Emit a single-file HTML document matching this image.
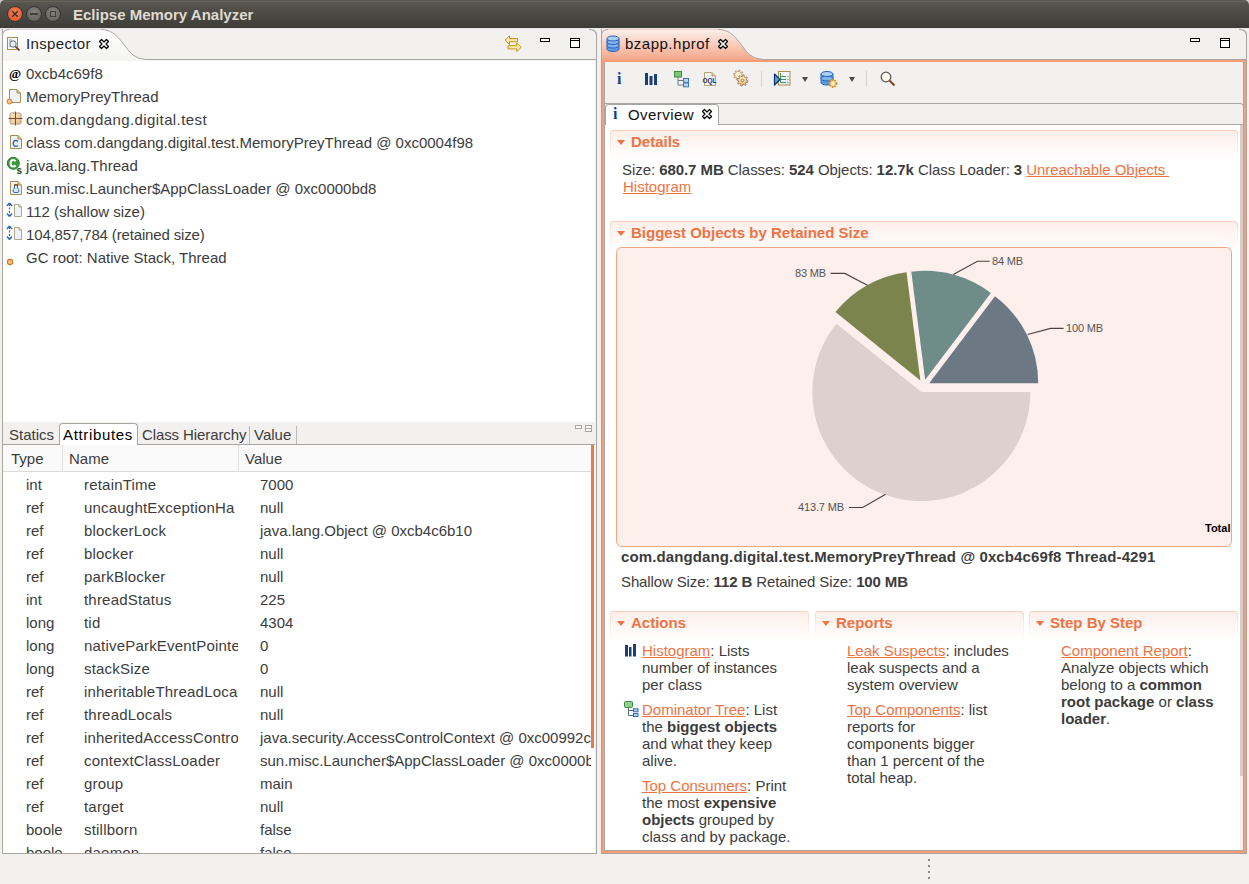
<!DOCTYPE html>
<html><head><meta charset="utf-8">
<style>
*{margin:0;padding:0;box-sizing:border-box}
html,body{width:1249px;height:884px;overflow:hidden;background:#f2f1f0;font-family:"Liberation Sans",sans-serif;font-size:15px;color:#3c3c3c;position:relative}
.a{position:absolute;white-space:nowrap}
.row{position:absolute;left:26px;white-space:nowrap}
.sec{position:absolute;border:1px solid #fad5c7;border-bottom:none;border-radius:4px 4px 0 0;background:linear-gradient(#fdeee9,#ffffff)}
.sec .h{position:absolute;left:20px;top:5px;font-weight:bold;color:#ef7343;font-size:15px;white-space:nowrap}
.sec .tri{position:absolute;left:6px;top:9px;width:0;height:0;border-left:4px solid transparent;border-right:4px solid transparent;border-top:5px solid #ef7343}
.lnk{color:#ef7343;text-decoration:underline}
.txt{position:absolute;line-height:17px;font-size:15px;color:#3c3c3c;white-space:nowrap}
</style></head><body>
<!-- Title bar -->
<div class="a" style="left:0;top:0;width:1249px;height:28px;background:#cfcdc9"></div><div class="a" style="left:0;top:0;width:1249px;height:28px;border-radius:5px 5px 0 0;background:linear-gradient(#5b5850,#4d4b45 45%,#3d3c38)"></div><div class="a" style="left:4px;top:1px;width:1241px;height:1px;background:#67645b"></div>
<div class="a" style="left:7px;top:6px;width:16px;height:16px;border-radius:50%;background:radial-gradient(circle at 50% 35%,#f47c52,#e0522b);border:1px solid #34332f"></div>
<svg class="a" style="left:7px;top:6px" width="16" height="16"><path d="M5.2,5.2 L10.8,10.8 M10.8,5.2 L5.2,10.8" stroke="#3a2a22" stroke-width="1.3"/></svg>
<div class="a" style="left:26px;top:6px;width:16px;height:16px;border-radius:50%;background:radial-gradient(circle at 50% 35%,#85837d,#5f5d58);border:1px solid #34332f"></div>
<div class="a" style="left:30px;top:13px;width:8px;height:2px;background:#3f3e3a"></div>
<div class="a" style="left:45px;top:6px;width:16px;height:16px;border-radius:50%;background:radial-gradient(circle at 50% 35%,#85837d,#5f5d58);border:1px solid #34332f"></div>
<div class="a" style="left:50px;top:11px;width:6px;height:6px;border:1.3px solid #3f3e3a"></div>
<div class="a titlehl" style="left:0;top:28px;width:1249px;height:1px;background:#e9e7e4"></div>
<div class="a" style="left:73px;top:6px;font-weight:bold;color:#dfdbd2;font-size:15px">Eclipse Memory Analyzer</div>
<!-- LEFT PANEL -->
<div class="a" style="left:2px;top:29px;width:595px;height:825px;background:#f2f1f0;border:1px solid #a9a6a1;border-top:none;border-radius:0 6px 0 0"></div>
<svg class="a" style="left:0;top:28px" width="600" height="34">
  <defs><linearGradient id="gIns" x1="0" y1="0" x2="0" y2="1"><stop offset="0" stop-color="#ffffff"/><stop offset="1" stop-color="#f2f1f0"/></linearGradient></defs>
  <path d="M2.5,40 L2.5,8 Q2.5,1.5 9,1.5 L101,1.5 C118,1.5 124,20 133,27 Q138,31 146,31.5 L589,31.5 Q596.5,31.5 596.5,24 L596.5,8 Q596.5,1.5 590,1.5 L101,1.5" fill="none" stroke="none"/>
  <path d="M2.5,40 L2.5,8 Q2.5,1.5 9,1.5 L101,1.5 C118,1.5 124,20 133,27 Q138,31 146,31.5 L595,31.5 L595,40 Z" fill="url(#gIns)"/>
  <path d="M2.5,40 L2.5,8 Q2.5,1.5 9,1.5" fill="none" stroke="#a9a6a1" stroke-width="1"/><path d="M9,1.5 L101,1.5" fill="none" stroke="#d9d6d2" stroke-width="1"/><path d="M101,1.5 C118,1.5 124,20 133,27 Q138,31 146,31.5 L596,31.5" fill="none" stroke="#a9a6a1" stroke-width="1"/>
  <path d="M589,1.5 Q596.5,1.5 596.5,8 L596.5,40" fill="none" stroke="#a9a6a1" stroke-width="1"/>
</svg>
<!-- inspector tab icon -->
<svg class="a" style="left:6px;top:36px" width="16" height="16">
  <rect x="1.5" y="1.5" width="10" height="12" fill="#f6f8fb" stroke="#a98d4b"/>
  <path d="M3,4h3M3,6h2M3,10h2" stroke="#7b9ad0" stroke-width="1"/>
  <circle cx="7" cy="8" r="3.2" fill="#e9eef3" stroke="#6d6f75" stroke-width="1"/>
  <path d="M9.3,10.3 L13.5,14.5" stroke="#7a4a3a" stroke-width="1.8"/>
</svg>
<div class="a" style="left:26px;top:35px;font-size:15px;color:#1e1e1e;letter-spacing:0.35px">Inspector</div>
<svg class="a" style="left:98px;top:38px" width="12" height="12"><path d="M1.5,3.5 L3.5,1.5 L6,4 L8.5,1.5 L10.5,3.5 L8,6 L10.5,8.5 L8.5,10.5 L6,8 L3.5,10.5 L1.5,8.5 L4,6 Z" fill="#fff" stroke="#000" stroke-width="1.2" stroke-linejoin="round"/></svg>
<!-- header right icons -->
<svg class="a" style="left:503px;top:34px" width="20" height="20">
  <path d="M2,6.2 L6.5,1.8 L6.5,4.6 L14.5,4.6 L14.5,7.8 L6.5,7.8 L6.5,10.6 Z" fill="#fde9a8" stroke="#c8951d" stroke-width="1" stroke-linejoin="round"/>
  <path d="M18.2,13.3 L13.7,8.9 L13.7,11.7 L5,11.7 L5,14.9 L13.7,14.9 L13.7,17.7 Z" fill="#fde9a8" stroke="#c8951d" stroke-width="1" stroke-linejoin="round"/>
</svg>
<div class="a" style="left:540px;top:38px;width:10px;height:4px;border:1px solid #000;background:#fff"></div>
<div class="a" style="left:570px;top:38px;width:10px;height:10px;border:1px solid #000;background:#fff"></div><div class="a" style="left:571px;top:40px;width:8px;height:1px;background:#000"></div>
<!-- content white -->
<div class="a" style="left:3px;top:61px;width:592px;height:361px;background:#fff"></div>

<!-- rows -->
<div class="a" style="left:9px;top:66px;font-family:'Liberation Serif';font-weight:bold;font-size:13px;color:#000">@</div>
<div class="row" style="top:65px">0xcb4c69f8</div>
<svg class="a" style="left:6px;top:88px" width="17" height="17">
  <path d="M3.5,1.5 L11,1.5 L14.5,5 L14.5,14.5 L3.5,14.5 Z" fill="#eef3fa" stroke="#a98d4b"/>
  <path d="M11,1.5 L11,5 L14.5,5" fill="#e8c572" stroke="#a98d4b"/>
  <circle cx="3.5" cy="13.5" r="2.5" fill="#fdc38a" stroke="#d6731e"/>
</svg>
<div class="row" style="top:88px">MemoryPreyThread</div>
<svg class="a" style="left:8px;top:111px" width="15" height="15">
  <defs><linearGradient id="gPk" x1="0" y1="0" x2="1" y2="1"><stop offset="0" stop-color="#fbe8c0"/><stop offset="1" stop-color="#e6c08a"/></linearGradient></defs>
  <rect x="2" y="2" width="11" height="11" rx="1.5" fill="url(#gPk)" stroke="#b88f78" stroke-width="1"/>
  <path d="M7.5,0.5 L7.5,14.5 M0.5,7.5 L14.5,7.5" stroke="#7a4a3a" stroke-width="1"/>
</svg>
<div class="row" style="top:111px;letter-spacing:0.4px">com.dangdang.digital.test</div>
<svg class="a" style="left:9px;top:134px" width="14" height="16">
  <path d="M1.5,1.5 L9,1.5 L12.5,5 L12.5,14.5 L1.5,14.5 Z" fill="#eef3fa" stroke="#a98d4b"/>
  <path d="M9,1.5 L9,5 L12.5,5" fill="#e8c572" stroke="#a98d4b"/>
  <path d="M9,7.5 Q8,6.5 6.5,6.5 Q4.3,6.5 4.3,9.5 Q4.3,12.3 6.5,12.3 Q8,12.3 9,11.5" fill="none" stroke="#2e66b5" stroke-width="1.3"/>
</svg>
<div class="row" style="top:134px">class com.dangdang.digital.test.MemoryPreyThread @ 0xc0004f98</div>
<svg class="a" style="left:6px;top:156px" width="18" height="18">
  <circle cx="7.3" cy="7.3" r="6" fill="#3d9b3d" stroke="#2a7a2a" stroke-width="1"/>
  <path d="M9.6,5.2 Q8.8,4 7.3,4 Q4.6,4 4.6,7.3 Q4.6,10.6 7.3,10.6 Q8.8,10.6 9.6,9.4" fill="none" stroke="#fff" stroke-width="2"/>
  <text x="10.5" y="17.5" font-family="Liberation Sans" font-weight="bold" font-size="10" fill="#0a4a0a">s</text>
</svg>
<div class="row" style="top:157px">java.lang.Thread</div>
<svg class="a" style="left:9px;top:180px" width="14" height="16">
  <path d="M1.5,1.5 L9,1.5 L12.5,5 L12.5,14.5 L1.5,14.5 Z" fill="#eef3fa" stroke="#a98d4b"/>
  <path d="M9,1.5 L9,5 L12.5,5" fill="#e8c572" stroke="#a98d4b"/>
  <path d="M5,5 L9,5 M5.5,5.5 L5.5,8 Q4,9.5 4,11 Q4,12.5 5.5,12.5 L8.5,12.5 Q10,12.5 10,11 Q10,9.5 8.5,8 L8.5,5.5" fill="#d8e6f7" stroke="#2e66b5" stroke-width="1"/>
  <path d="M5,5 L9,5" stroke="#a0442a" stroke-width="1.5"/>
</svg>
<div class="row" style="top:180px">sun.misc.Launcher$AppClassLoader @ 0xc0000bd8</div>
<svg class="a" style="left:6px;top:202px" width="17" height="17">
  <path d="M3.5,1 L1,4 M3.5,1 L6,4 M3.5,14.5 L1,11.5 M3.5,14.5 L6,11.5" stroke="#2e66b5" stroke-width="1.4" fill="none"/>
  <path d="M3.5,2 L3.5,14" stroke="#2e66b5" stroke-width="1.2" stroke-dasharray="2,1.5"/>
  <path d="M8.5,2.5 L13,2.5 L15.5,5 L15.5,14.5 L8.5,14.5 Z" fill="#eef3fa" stroke="#aea58a"/>
  <path d="M13,2.5 L13,5 L15.5,5" fill="#e8c572" stroke="#aea58a"/>
</svg>
<div class="row" style="top:203px">112 (shallow size)</div>
<svg class="a" style="left:6px;top:225px" width="17" height="17">
  <path d="M3.5,1 L1,4 M3.5,1 L6,4 M3.5,14.5 L1,11.5 M3.5,14.5 L6,11.5" stroke="#2e66b5" stroke-width="1.4" fill="none"/>
  <path d="M3.5,2 L3.5,14" stroke="#2e66b5" stroke-width="1.2" stroke-dasharray="2,1.5"/>
  <path d="M8.5,2.5 L13,2.5 L15.5,5 L15.5,14.5 L8.5,14.5 Z" fill="#eef3fa" stroke="#aea58a"/>
  <path d="M13,2.5 L13,5 L15.5,5" fill="#e8c572" stroke="#aea58a"/>
</svg>
<div class="row" style="top:226px;letter-spacing:-0.15px">104,857,784 (retained size)</div>
<svg class="a" style="left:6px;top:258px" width="8" height="8"><circle cx="4" cy="4" r="2.6" fill="#fcc28c" stroke="#d6701c" stroke-width="1.1"/></svg>
<div class="row" style="top:249px">GC root: Native Stack, Thread</div>

<!-- bottom tab strip -->
<div class="a" style="left:3px;top:422px;width:592px;height:23px;background:#f2f1f0;border-bottom:1px solid #a9a6a1"></div>
<div class="a" style="left:59px;top:423px;width:79px;height:22px;background:#fff;border:1px solid #a9a6a1;border-bottom:none;border-radius:4px 4px 0 0"></div>
<div class="a" style="left:249px;top:426px;width:1px;height:18px;background:#bdbab5"></div>
<div class="a" style="left:296px;top:426px;width:1px;height:18px;background:#bdbab5"></div>
<div class="a" style="left:9px;top:426px;color:#3c3c3c">Statics</div>
<div class="a" style="left:63px;top:426px;color:#000;letter-spacing:0.65px">Attributes</div>
<div class="a" style="left:142px;top:426px;color:#3c3c3c;letter-spacing:-0.1px">Class Hierarchy</div>
<div class="a" style="left:254px;top:426px;color:#3c3c3c">Value</div>
<div class="a" style="left:575px;top:425px;width:7px;height:4px;border:1px solid #a9a6a1;background:#fff"></div>
<div class="a" style="left:585px;top:425px;width:7px;height:7px;border:1px solid #a9a6a1;background:#fff"></div>
<div class="a" style="left:586px;top:428px;width:5px;height:1px;background:#a9a6a1"></div>

<!-- table -->
<div class="a" style="left:3px;top:445px;width:592px;height:408px;background:#fff"></div>
<div class="a" style="left:3px;top:445px;width:588px;height:27px;background:#fafafa;border-bottom:1px solid #dcdbd9"></div>
<div class="a" style="left:62px;top:445px;width:1px;height:27px;background:#e2e1df"></div>
<div class="a" style="left:238px;top:445px;width:1px;height:27px;background:#e2e1df"></div>
<div class="a" style="left:11px;top:450px">Type</div>
<div class="a" style="left:69px;top:450px">Name</div>
<div class="a" style="left:245px;top:450px">Value</div>
<div class="a" style="left:591px;top:445px;width:3px;height:303px;background:#f07746"></div>
<div id="tbl" class="a" style="left:3px;top:473px;width:588px;height:380px;overflow:hidden">
<div class="a" style="left:23px;top:3px;width:36px;overflow:hidden">int</div>
<div class="a" style="left:81px;top:3px;width:154px;overflow:hidden;letter-spacing:0.2px">retainTime</div>
<div class="a" style="left:257px;top:3px">7000</div>
<div class="a" style="left:23px;top:26px;width:36px;overflow:hidden">ref</div>
<div class="a" style="left:81px;top:26px;width:154px;overflow:hidden;letter-spacing:0.2px">uncaughtExceptionHa</div>
<div class="a" style="left:257px;top:26px">null</div>
<div class="a" style="left:23px;top:49px;width:36px;overflow:hidden">ref</div>
<div class="a" style="left:81px;top:49px;width:154px;overflow:hidden;letter-spacing:0.2px">blockerLock</div>
<div class="a" style="left:257px;top:49px">java.lang.Object @ 0xcb4c6b10</div>
<div class="a" style="left:23px;top:72px;width:36px;overflow:hidden">ref</div>
<div class="a" style="left:81px;top:72px;width:154px;overflow:hidden;letter-spacing:0.2px">blocker</div>
<div class="a" style="left:257px;top:72px">null</div>
<div class="a" style="left:23px;top:95px;width:36px;overflow:hidden">ref</div>
<div class="a" style="left:81px;top:95px;width:154px;overflow:hidden;letter-spacing:0.2px">parkBlocker</div>
<div class="a" style="left:257px;top:95px">null</div>
<div class="a" style="left:23px;top:118px;width:36px;overflow:hidden">int</div>
<div class="a" style="left:81px;top:118px;width:154px;overflow:hidden;letter-spacing:0.2px">threadStatus</div>
<div class="a" style="left:257px;top:118px">225</div>
<div class="a" style="left:23px;top:141px;width:36px;overflow:hidden">long</div>
<div class="a" style="left:81px;top:141px;width:154px;overflow:hidden;letter-spacing:0.2px">tid</div>
<div class="a" style="left:257px;top:141px">4304</div>
<div class="a" style="left:23px;top:164px;width:36px;overflow:hidden">long</div>
<div class="a" style="left:81px;top:164px;width:154px;overflow:hidden;letter-spacing:0.2px">nativeParkEventPointe</div>
<div class="a" style="left:257px;top:164px">0</div>
<div class="a" style="left:23px;top:187px;width:36px;overflow:hidden">long</div>
<div class="a" style="left:81px;top:187px;width:154px;overflow:hidden;letter-spacing:0.2px">stackSize</div>
<div class="a" style="left:257px;top:187px">0</div>
<div class="a" style="left:23px;top:210px;width:36px;overflow:hidden">ref</div>
<div class="a" style="left:81px;top:210px;width:154px;overflow:hidden;letter-spacing:0.2px">inheritableThreadLoca</div>
<div class="a" style="left:257px;top:210px">null</div>
<div class="a" style="left:23px;top:233px;width:36px;overflow:hidden">ref</div>
<div class="a" style="left:81px;top:233px;width:154px;overflow:hidden;letter-spacing:0.2px">threadLocals</div>
<div class="a" style="left:257px;top:233px">null</div>
<div class="a" style="left:23px;top:256px;width:36px;overflow:hidden">ref</div>
<div class="a" style="left:81px;top:256px;width:154px;overflow:hidden;letter-spacing:0.2px">inheritedAccessContro</div>
<div class="a" style="left:257px;top:256px">java.security.AccessControlContext @ 0xc00992c</div>
<div class="a" style="left:23px;top:279px;width:36px;overflow:hidden">ref</div>
<div class="a" style="left:81px;top:279px;width:154px;overflow:hidden;letter-spacing:0.2px">contextClassLoader</div>
<div class="a" style="left:257px;top:279px">sun.misc.Launcher$AppClassLoader @ 0xc0000bd8</div>
<div class="a" style="left:23px;top:302px;width:36px;overflow:hidden">ref</div>
<div class="a" style="left:81px;top:302px;width:154px;overflow:hidden;letter-spacing:0.2px">group</div>
<div class="a" style="left:257px;top:302px">main</div>
<div class="a" style="left:23px;top:325px;width:36px;overflow:hidden">ref</div>
<div class="a" style="left:81px;top:325px;width:154px;overflow:hidden;letter-spacing:0.2px">target</div>
<div class="a" style="left:257px;top:325px">null</div>
<div class="a" style="left:23px;top:348px;width:36px;overflow:hidden">boolean</div>
<div class="a" style="left:81px;top:348px;width:154px;overflow:hidden;letter-spacing:0.2px">stillborn</div>
<div class="a" style="left:257px;top:348px">false</div>
<div class="a" style="left:23px;top:371px;width:36px;overflow:hidden">boolean</div>
<div class="a" style="left:81px;top:371px;width:154px;overflow:hidden;letter-spacing:0.2px">daemon</div>
<div class="a" style="left:257px;top:371px">false</div>
</div>
<!-- RIGHT PANEL -->
<div class="a" style="left:601px;top:29px;width:646px;height:825px;background:#f2f1f0;border:1px solid #a9a6a1;border-top:none;border-radius:0 6px 0 0"></div>
<svg class="a" style="left:598px;top:28px" width="651" height="34">
  <defs><linearGradient id="gHp" x1="0" y1="0" x2="0" y2="1"><stop offset="0" stop-color="#fdf0ea"/><stop offset="1" stop-color="#f4a283"/></linearGradient></defs>
  <path d="M4,34 L4,8 Q4,1.5 10.5,1.5 L120,1.5 C138,1.5 143,20 152,27 Q157,31 165,31.5 L648,31.5 L648,34 Z" fill="url(#gHp)"/>
  <path d="M3.5,34 L3.5,8 Q3.5,1.5 10,1.5" fill="none" stroke="#a9a6a1" stroke-width="1"/><path d="M10,1.5 L120,1.5" fill="none" stroke="#f3d2c4" stroke-width="1"/><path d="M120,1.5 C138,1.5 143,20 152,27 Q157,31 165,31.5 L648,31.5" fill="none" stroke="#a9a6a1" stroke-width="1"/>
  <path d="M641,1.5 Q648.5,1.5 648.5,8 L648.5,34" fill="none" stroke="#a9a6a1" stroke-width="1"/>
</svg>
<!-- orange frame -->
<div class="a" style="left:602px;top:60px;width:644px;height:793px;border:2px solid #f89c76"></div>
<div class="a" style="left:604px;top:62px;width:640px;height:789px;border:1px solid #aba7a2;border-top:none"></div>
<!-- db icon in tab -->
<svg class="a" style="left:606px;top:35px" width="15" height="18">
  <ellipse cx="7" cy="14" rx="6" ry="2.5" fill="#5c9be0" stroke="#2a62c0"/>
  <rect x="1" y="4" width="12" height="10" fill="#5c9be0"/>
  <path d="M1,4 L1,14 M13,4 L13,14" stroke="#2a62c0"/>
  <ellipse cx="7" cy="10.5" rx="6" ry="2.5" fill="#7fb5ec" stroke="#2a62c0"/>
  <ellipse cx="7" cy="7" rx="6" ry="2.5" fill="#7fb5ec" stroke="#2a62c0"/>
  <ellipse cx="7" cy="3.5" rx="6" ry="2.5" fill="#a9d0f5" stroke="#2a62c0"/>
</svg>
<div class="a" style="left:625px;top:35px;color:#111;letter-spacing:0.5px">bzapp.hprof</div>
<svg class="a" style="left:717px;top:38px" width="12" height="12"><path d="M1.5,3.5 L3.5,1.5 L6,4 L8.5,1.5 L10.5,3.5 L8,6 L10.5,8.5 L8.5,10.5 L6,8 L3.5,10.5 L1.5,8.5 L4,6 Z" fill="#fff" stroke="#000" stroke-width="1.2" stroke-linejoin="round"/></svg>
<div class="a" style="left:1190px;top:38px;width:10px;height:4px;border:1px solid #000;background:#fff"></div>
<div class="a" style="left:1220px;top:38px;width:10px;height:10px;border:1px solid #000;background:#fff"></div><div class="a" style="left:1221px;top:40px;width:8px;height:1px;background:#000"></div>

<!-- toolbar -->
<div class="a" style="left:617px;top:70px;font-family:'Liberation Serif';font-weight:bold;font-size:16px;color:#0d3f8f">i</div>
<svg class="a" style="left:644px;top:72px" width="14" height="14"><rect x="1" y="1" width="3" height="12" fill="#1d3f78"/><rect x="5.5" y="4" width="3" height="9" fill="#1d3f78"/><rect x="10" y="2" width="3" height="11" fill="#1d3f78"/></svg>
<svg class="a" style="left:673px;top:70px" width="17" height="18">
  <rect x="1.5" y="1.5" width="7" height="5.5" fill="#7cc87a" stroke="#3f8a3d"/>
  <path d="M5,7 L5,15 L10.5,15 M5,10.5 L10.5,10.5" stroke="#6a7a90" fill="none"/>
  <rect x="10.5" y="8.5" width="5" height="3.8" fill="#bcd6f0" stroke="#3a74c0"/>
  <rect x="10.5" y="13" width="5" height="3.8" fill="#bcd6f0" stroke="#3a74c0"/>
</svg>
<svg class="a" style="left:702px;top:71px" width="16" height="16">
  <path d="M2.5,1.5 L10,1.5 L13.5,5 L13.5,14.5 L2.5,14.5 Z" fill="#eef3fa" stroke="#b9a46c"/>
  <path d="M10,1.5 L10,5 L13.5,5" fill="#e8c572" stroke="#b9a46c"/>
  <text x="0.5" y="11.5" font-family="Liberation Sans" font-weight="bold" font-size="6.5" fill="#25307a">OQL</text>
</svg>
<svg class="a" style="left:732px;top:69px" width="18" height="18">
  <defs><linearGradient id="gGear" x1="0" y1="0" x2="0" y2="1"><stop offset="0" stop-color="#fff6c8"/><stop offset="1" stop-color="#f0b860"/></linearGradient></defs>
  <path d="M9.90,6.01 L11.28,6.40 L11.05,7.53 L9.63,7.35 L8.87,8.48 L9.57,9.74 L8.61,10.37 L7.73,9.24 L6.39,9.50 L6.00,10.88 L4.87,10.65 L5.05,9.23 L3.92,8.47 L2.66,9.17 L2.03,8.21 L3.16,7.33 L2.90,5.99 L1.52,5.60 L1.75,4.47 L3.17,4.65 L3.93,3.52 L3.23,2.26 L4.19,1.63 L5.07,2.76 L6.41,2.50 L6.80,1.12 L7.93,1.35 L7.75,2.77 L8.88,3.53 L10.14,2.83 L10.77,3.79 L9.64,4.67 Z" fill="#fbf1cf" stroke="#b98a6a" stroke-width="0.9"/>
  <path d="M14.60,11.51 L16.08,11.96 L15.82,13.25 L14.28,13.08 L13.39,14.41 L14.12,15.77 L13.02,16.50 L12.06,15.29 L10.49,15.60 L10.04,17.08 L8.75,16.82 L8.92,15.28 L7.59,14.39 L6.23,15.12 L5.50,14.02 L6.71,13.06 L6.40,11.49 L4.92,11.04 L5.18,9.75 L6.72,9.92 L7.61,8.59 L6.88,7.23 L7.98,6.50 L8.94,7.71 L10.51,7.40 L10.96,5.92 L12.25,6.18 L12.08,7.72 L13.41,8.61 L14.77,7.88 L15.50,8.98 L14.29,9.94 Z" fill="url(#gGear)" stroke="#a8745a" stroke-width="0.9"/>
  <circle cx="10.5" cy="11.5" r="1.3" fill="#fff" stroke="#8a6a5a" stroke-width="0.8"/>
</svg>
<div class="a" style="left:761px;top:71px;width:1px;height:16px;background:#d6d3cf"></div>
<svg class="a" style="left:772px;top:69px" width="20" height="18">
  <defs><linearGradient id="gQb" x1="0" y1="0" x2="1" y2="1"><stop offset="0" stop-color="#ffffff"/><stop offset="1" stop-color="#dfe8f2"/></linearGradient></defs>
  <rect x="6.5" y="2.5" width="11.5" height="13.5" fill="url(#gQb)" stroke="#b0904a"/>
  <path d="M8.5,4 L8.5,13.5 M8.5,7.5 L14,7.5 M8.5,10.5 L14,10.5 M8.5,13.5 L14,13.5" stroke="#3a9a50" stroke-width="1" fill="none"/>
  <path d="M15.5,7.5h1 M15.5,10.5h1 M15.5,13.5h1" stroke="#3a9a50" stroke-width="1"/>
  <path d="M2.5,5 L8,10.5 L2.5,16 Z" fill="#5aa6c8" stroke="#0e2f80" stroke-width="1.2" stroke-linejoin="round"/>
</svg>
<div class="a" style="left:802px;top:77px;width:0;height:0;border-left:3.5px solid transparent;border-right:3.5px solid transparent;border-top:5px solid #4a4a4a"></div>
<svg class="a" style="left:820px;top:70px" width="19" height="19">
  <ellipse cx="7" cy="12.5" rx="6" ry="2.5" fill="#5c9be0" stroke="#2a62c0"/>
  <rect x="1" y="4" width="12" height="8.5" fill="#5c9be0"/>
  <path d="M1,4 L1,12.5 M13,4 L13,12.5" stroke="#2a62c0"/>
  <ellipse cx="7" cy="8.5" rx="6" ry="2.5" fill="#7fb5ec" stroke="#2a62c0"/>
  <ellipse cx="7" cy="4" rx="6" ry="2.5" fill="#a9d0f5" stroke="#2a62c0"/>
  <circle cx="13" cy="13.5" r="3.5" fill="#f7d98c" stroke="#d48a2a" stroke-width="1.8" stroke-dasharray="1.5,1"/>
  <circle cx="13" cy="13.5" r="1.2" fill="#fff"/>
</svg>
<div class="a" style="left:849px;top:77px;width:0;height:0;border-left:3.5px solid transparent;border-right:3.5px solid transparent;border-top:5px solid #4a4a4a"></div>
<div class="a" style="left:866px;top:71px;width:1px;height:16px;background:#d6d3cf"></div>
<svg class="a" style="left:880px;top:71px" width="17" height="17">
  <circle cx="6" cy="6" r="4.8" fill="#fbfbef" stroke="#5a5a5a" stroke-width="1.3"/>
  <path d="M9.5,9.5 L14.5,14.5" stroke="#8a4a2a" stroke-width="2.2"/>
</svg>

<!-- overview tab strip -->
<div class="a" style="left:605px;top:103px;width:639px;height:22px;background:#f2f1f0;border:1px solid #a9a6a1;border-left:none;border-radius:0 4px 0 0"></div>
<div class="a" style="left:605px;top:104px;width:114px;height:21px;background:#fff;border:1px solid #a9a6a1;border-bottom:none;border-radius:4px 4px 0 0"></div>
<div class="a" style="left:613px;top:105px;font-family:'Liberation Serif';font-weight:bold;font-size:16px;color:#0d3f8f">i</div>
<div class="a" style="left:628px;top:106px;color:#111;letter-spacing:0.45px">Overview</div>
<svg class="a" style="left:701px;top:108px" width="12" height="12"><path d="M1.5,3.5 L3.5,1.5 L6,4 L8.5,1.5 L10.5,3.5 L8,6 L10.5,8.5 L8.5,10.5 L6,8 L3.5,10.5 L1.5,8.5 L4,6 Z" fill="#fff" stroke="#000" stroke-width="1.2" stroke-linejoin="round"/></svg>

<!-- content -->
<div class="a" style="left:605px;top:125px;width:635px;height:725px;background:#fff"></div>
<div class="a" style="left:1240px;top:125px;width:3px;height:651px;background:#d2cfcc"></div>
<!-- Details -->
<div class="a" style="left:610px;top:130px;width:628px;height:29px;border-radius:4px 4px 0 0;background:linear-gradient(#f9cdbb,#fde3d8 30%,rgba(255,255,255,0))"></div><div class="a" style="left:611px;top:131px;width:626px;height:28px;border-radius:3px 3px 0 0;background:linear-gradient(#fdefea,#fff)"></div>
<div class="a" style="left:617px;top:140px;width:0;height:0;border-left:4px solid transparent;border-right:4px solid transparent;border-top:5px solid #ef7343"></div>
<div class="a" style="left:631px;top:133px;font-weight:bold;color:#ef7343">Details</div>
<div class="txt" style="left:622px;top:161px;letter-spacing:-0.06px">Size: <b>680.7 MB</b> Classes: <b>524</b> Objects: <b>12.7k</b> Class Loader: <b>3</b> <span class="lnk">Unreachable Objects&nbsp;</span></div>
<div class="txt" style="left:623px;top:178px"><span class="lnk">Histogram</span></div>

<!-- Biggest -->
<div class="a" style="left:610px;top:221px;width:628px;height:29px;border-radius:4px 4px 0 0;background:linear-gradient(#f9cdbb,#fde3d8 30%,rgba(255,255,255,0))"></div><div class="a" style="left:611px;top:222px;width:626px;height:28px;border-radius:3px 3px 0 0;background:linear-gradient(#fdefea,#fff)"></div>
<div class="a" style="left:617px;top:231px;width:0;height:0;border-left:4px solid transparent;border-right:4px solid transparent;border-top:5px solid #ef7343"></div>
<div class="a" style="left:631px;top:224px;font-weight:bold;color:#ef7343">Biggest Objects by Retained Size</div>
<svg class="a" style="left:616px;top:247px" width="617" height="300"><rect x="0.5" y="0.5" width="615" height="299" rx="5" fill="#fdefec" stroke="#f4a385"/><path d="M305.37,145.04 L414.37,145.04 A109.0,109.0 0 1 1 220.43,76.74 Z" fill="#ddd0cd"/><path d="M304.37,133.42 L219.42,65.12 A109.0,109.0 0 0 1 290.52,25.30 Z" fill="#7b844d"/><path d="M309.15,132.82 L295.30,24.70 A109.0,109.0 0 0 1 374.90,45.88 Z" fill="#6e8c88"/><path d="M313.23,136.15 L378.98,49.21 A109.0,109.0 0 0 1 422.23,136.15 Z" fill="#6c7984"/><path d="M214.7,26.4 L228.8,26.4 L251.4,38.3" fill="none" stroke="#4d4141" stroke-width="1.1"/><path d="M373.7,14.3 L361.4,14.3 L337.3,27.5" fill="none" stroke="#4d4141" stroke-width="1.1"/><path d="M447.6,81.4 L434.6,81.4 L411.6,87.5" fill="none" stroke="#4d4141" stroke-width="1.1"/><path d="M233.0,260.5 L246.7,260.5 L269.6,247.3" fill="none" stroke="#4d4141" stroke-width="1.1"/></svg>
<div class="a" style="left:795px;top:267px;font-size:11px;color:#555;letter-spacing:-0.15px">83 MB</div>
<div class="a" style="left:992px;top:255px;font-size:11px;color:#555;letter-spacing:-0.15px">84 MB</div>
<div class="a" style="left:1066px;top:322px;font-size:11px;color:#555;letter-spacing:-0.15px">100 MB</div>
<div class="a" style="left:798px;top:501px;font-size:11px;color:#555;letter-spacing:-0.15px">413.7 MB</div>
<div class="a" style="left:1205px;top:522px;font-size:11px;font-weight:bold;color:#000">Total</div>
<div class="a" style="left:621px;top:548px;font-weight:bold;color:#3c3c3c;letter-spacing:0.12px">com.dangdang.digital.test.MemoryPreyThread @ 0xcb4c69f8 Thread-4291</div>
<div class="a" style="left:621px;top:573px;color:#3c3c3c;letter-spacing:-0.12px">Shallow Size: <b>112 B</b> Retained Size: <b>100 MB</b></div>

<!-- Actions -->
<div class="a" style="left:610px;top:611px;width:199px;height:29px;border-radius:4px 4px 0 0;background:linear-gradient(#f9cdbb,#fde3d8 30%,rgba(255,255,255,0))"></div><div class="a" style="left:611px;top:612px;width:197px;height:28px;border-radius:3px 3px 0 0;background:linear-gradient(#fdefea,#fff)"></div>
<div class="a" style="left:617px;top:621px;width:0;height:0;border-left:4px solid transparent;border-right:4px solid transparent;border-top:5px solid #ef7343"></div>
<div class="a" style="left:631px;top:614px;font-weight:bold;color:#ef7343">Actions</div>
<div class="a" style="left:815px;top:611px;width:209px;height:29px;border-radius:4px 4px 0 0;background:linear-gradient(#f9cdbb,#fde3d8 30%,rgba(255,255,255,0))"></div><div class="a" style="left:816px;top:612px;width:207px;height:28px;border-radius:3px 3px 0 0;background:linear-gradient(#fdefea,#fff)"></div>
<div class="a" style="left:822px;top:621px;width:0;height:0;border-left:4px solid transparent;border-right:4px solid transparent;border-top:5px solid #ef7343"></div>
<div class="a" style="left:836px;top:614px;font-weight:bold;color:#ef7343">Reports</div>
<div class="a" style="left:1029px;top:611px;width:209px;height:29px;border-radius:4px 4px 0 0;background:linear-gradient(#f9cdbb,#fde3d8 30%,rgba(255,255,255,0))"></div><div class="a" style="left:1030px;top:612px;width:207px;height:28px;border-radius:3px 3px 0 0;background:linear-gradient(#fdefea,#fff)"></div>
<div class="a" style="left:1036px;top:621px;width:0;height:0;border-left:4px solid transparent;border-right:4px solid transparent;border-top:5px solid #ef7343"></div>
<div class="a" style="left:1050px;top:614px;font-weight:bold;color:#ef7343">Step By Step</div>

<svg class="a" style="left:624px;top:644px" width="13" height="13"><rect x="1" y="1" width="3" height="11.5" fill="#1d3f78"/><rect x="5" y="3" width="2.5" height="9.5" fill="#1d3f78"/><rect x="9" y="0" width="3" height="12.5" fill="#1d3f78"/></svg>
<div class="txt" style="left:642px;top:642px"><span class="lnk">Histogram</span>: Lists</div>
<div class="txt" style="left:642px;top:659px">number of instances</div>
<div class="txt" style="left:642px;top:676px">per class</div>
<svg class="a" style="left:623px;top:700px" width="16" height="18">
  <rect x="1.5" y="1.5" width="8" height="6" rx="1" fill="#8fd08a" stroke="#3a8a4a"/>
  <path d="M5.5,7.5 L5.5,15.5 L10.5,15.5 M5.5,10.5 L10.5,10.5" stroke="#5a6a80" fill="none"/>
  <rect x="10.5" y="8.8" width="4.5" height="3" fill="#a8d0f0" stroke="#3a6ac0"/>
  <rect x="10.5" y="13.5" width="4.5" height="3" fill="#a8d0f0" stroke="#3a6ac0"/>
</svg>
<div class="txt" style="left:642px;top:701px"><span class="lnk">Dominator Tree</span>: List</div>
<div class="txt" style="left:642px;top:718px">the <b>biggest objects</b></div>
<div class="txt" style="left:642px;top:735px">and what they keep</div>
<div class="txt" style="left:642px;top:752px">alive.</div>
<div class="txt" style="left:642px;top:777px"><span class="lnk">Top Consumers</span>: Print</div>
<div class="txt" style="left:642px;top:794px">the most <b>expensive</b></div>
<div class="txt" style="left:642px;top:811px"><b>objects</b> grouped by</div>
<div class="txt" style="left:642px;top:828px">class and by package.</div>

<div class="txt" style="left:847px;top:642px"><span class="lnk">Leak Suspects</span>: includes</div>
<div class="txt" style="left:847px;top:659px">leak suspects and a</div>
<div class="txt" style="left:847px;top:676px">system overview</div>
<div class="txt" style="left:847px;top:701px"><span class="lnk">Top Components</span>: list</div>
<div class="txt" style="left:847px;top:718px">reports for</div>
<div class="txt" style="left:847px;top:735px">components bigger</div>
<div class="txt" style="left:847px;top:752px">than 1 percent of the</div>
<div class="txt" style="left:847px;top:769px">total heap.</div>

<div class="txt" style="left:1061px;top:642px"><span class="lnk">Component Report</span>:</div>
<div class="txt" style="left:1061px;top:659px">Analyze objects which</div>
<div class="txt" style="left:1061px;top:676px">belong to a <b>common</b></div>
<div class="txt" style="left:1061px;top:693px"><b>root package</b> or <b>class</b></div>
<div class="txt" style="left:1061px;top:710px"><b>loader</b>.</div>

<!-- status bar dots -->
<div class="a" style="left:928px;top:859px;width:2px;height:2px;background:#8a887f"></div>
<div class="a" style="left:928px;top:865px;width:2px;height:2px;background:#8a887f"></div>
<div class="a" style="left:928px;top:871px;width:2px;height:2px;background:#8a887f"></div>
<div class="a" style="left:928px;top:877px;width:2px;height:2px;background:#8a887f"></div>
</body></html>
